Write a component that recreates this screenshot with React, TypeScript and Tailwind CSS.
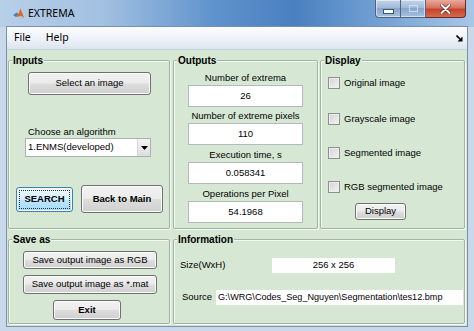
import React from "react";

/**
 * EXTREMA — MATLAB figure window (Win7 Aero frame) with inputs / outputs / display panels.
 */

const sans = "font-['Liberation_Sans',Arial,sans-serif]";
const btn =
  "flex items-center justify-center rounded-[3px] border border-[#707070] bg-[linear-gradient(#f2f2f2,#ebebeb_48%,#dddddd_52%,#cfcfcf)] text-black shadow-[inset_0_0_0_1px_#fbfbfb]";

function Panel({
  title,
  className = "",
  children,
}: {
  title: string;
  className?: string;
  children?: React.ReactNode;
}) {
  return (
    <fieldset
      className={`rounded-[2px] border border-[#a3b2a2] shadow-[inset_1px_1px_0_#f3faf2,1px_1px_0_#f3faf2] ${className}`}
    >
      <legend className="ml-[3px] bg-[#d6e8d4] px-[1px] text-[10px] font-bold leading-[13px] text-black">
        {title}
      </legend>
      {children}
    </fieldset>
  );
}

function OutputField({ label, value, mt }: { label: string; value: string; mt: string }) {
  return (
    <>
      <div className={`${mt} h-[12px] text-center leading-[12px]`}>{label}</div>
      <div className="mx-auto mt-[1px] flex h-[22px] w-[115px] items-center justify-center border border-[#b5b9bf] bg-white">
        {value}
      </div>
    </>
  );
}

function Check({ label, mt }: { label: string; mt: string }) {
  return (
    <div className={`${mt} ml-[7px] flex h-[14px] items-center gap-[4px]`}>
      <span className="h-[12px] w-[12px] border border-[#8e8f8f] bg-[linear-gradient(135deg,#d2d2d2,#f4f4f4)] shadow-[inset_0_0_0_1px_#eeeeee]" />
      <span>{label}</span>
    </div>
  );
}

function MatlabIcon() {
  return (
    <svg width="11" height="11" viewBox="0 0 11 11">
      <path d="M0 7 L4 4.5 L5.5 6 L3 9 Z" fill="#3f7fb8" />
      <path d="M3 9 L5.5 6 L7.5 0.5 L11 10 L8.5 8 Z" fill="#e0661f" />
      <path d="M7.5 0.5 L9 5 L11 10 L9.5 6.5 Z" fill="#b3320f" />
    </svg>
  );
}

export default function App() {
  return (
    <div
      className={`flex h-[331px] w-[474px] flex-col overflow-hidden bg-[linear-gradient(to_right,#b8cfe8,#a2c0e1_22%,#5f93cc_45%,#4a80c0_62%,#6d9dd1_78%,#a9c6e6)] ${sans} text-[9.5px] text-black`}
    >
      {/* title bar */}
      <div className="flex h-[27px] shrink-0 items-start">
        <div className="flex h-[27px] items-center gap-[4px] pl-[13px]">
          <MatlabIcon />
          <span className="font-['Noto_Sans',sans-serif] text-[10.5px] text-black">EXTREMA</span>
        </div>
        <div className="ml-auto mr-[8px] flex h-[18px]">
          <div className="flex rounded-bl-[4px] border border-t-0 border-[#4f6480] bg-[linear-gradient(#c3d5ea,#9db7d6_50%,#88a6cb_50%,#a7c0de)] shadow-[inset_0_0_0_1px_rgba(255,255,255,0.5)]">
            <div className="flex w-[25px] items-center justify-center border-r border-[#4f6480]">
              <span className="mt-[5px] h-[3px] w-[9px] bg-white shadow-[0_0_0_1px_#3b5272]" />
            </div>
            <div className="flex w-[24px] items-center justify-center">
              <span className="h-[7px] w-[9px] border border-[#e4ecf6] opacity-70" />
            </div>
          </div>
          <div className="flex w-[40px] items-center justify-center rounded-br-[4px] border border-l-0 border-t-0 border-[#6b2a22] bg-[linear-gradient(#e9a99c,#d7745f_45%,#c7432b_55%,#d56a4f)]">
            <svg width="11" height="10" viewBox="0 0 11 10">
              <path d="M1.5 1 L9.5 9 M9.5 1 L1.5 9" stroke="#5a1a12" strokeWidth="3.2" strokeLinecap="round" />
              <path d="M1.5 1 L9.5 9 M9.5 1 L1.5 9" stroke="#ffffff" strokeWidth="2" strokeLinecap="round" />
            </svg>
          </div>
        </div>
      </div>

      <div className="flex flex-1 flex-col bg-[#c9d9eb] px-[7px]">
        <div className="shadow-[0_0_0_1px_#7890ad]">
          {/* menu bar */}
          <div className="flex h-[23px] items-center border-b border-[#c5d2e0] bg-[linear-gradient(#fbfcfe,#eef2f8_55%,#dde4ee)] font-['Noto_Sans',sans-serif] text-[10.5px]">
            <span className="ml-[7px]">File</span>
            <span className="ml-[15px]">Help</span>
            <svg className="ml-auto mr-[4px]" width="7" height="7" viewBox="0 0 7 7">
              <path d="M0.5 0.5 L5 5" stroke="#000" strokeWidth="1.6" />
              <path d="M1.5 6.5 L6.5 6.5 L6.5 1.5 Z" fill="#000" />
            </svg>
          </div>

          {/* client area */}
          <div className="flex h-[276px] flex-col bg-[#d6e8d4] pl-[1px] pt-[4px]">
            <div className="flex h-[175px]">
              <Panel title="Inputs" className="w-[162px]">
                <button className={`${btn} ml-[19px] mt-[5px] h-[23px] w-[123px]`}>Select an image</button>
                <div className="ml-[19px] mt-[31px] h-[12px] leading-[12px]">Choose an algorithm</div>
                <div className="ml-[16px] flex h-[19px] w-[126px] items-center border border-[#a9b0b8] bg-white">
                  <span className="flex-1 pl-[2px]">1.ENMS(developed)</span>
                  <span className="flex h-full w-[13px] items-center justify-center border-l border-[#d5d9de] bg-[linear-gradient(#f4f4f4,#dedede)]">
                    <svg width="7" height="4" viewBox="0 0 7 4">
                      <path d="M0 0 L7 0 L3.5 4 Z" fill="#000" />
                    </svg>
                  </span>
                </div>
                <div className="ml-[7px] mt-[28px] flex items-center gap-[8px]">
                  <button className="flex h-[25px] w-[57px] rounded-[3px] border border-[#3c7fb1] bg-[linear-gradient(#eaf6fd,#d9f0fc_48%,#bee6fd_52%,#a7d9f5)] p-[2px] shadow-[inset_0_0_0_1px_#f4fbff]">
                    <span className="flex flex-1 items-center justify-center border border-dotted border-[#333] font-bold">
                      SEARCH
                    </span>
                  </button>
                  <button className={`${btn} h-[28px] w-[82px] font-bold`}>Back to Main</button>
                </div>
              </Panel>

              <Panel title="Outputs" className="ml-[3px] w-[145px]">
                <OutputField mt="mt-[5px]" label="Number of extrema" value="26" />
                <OutputField mt="mt-[3px]" label="Number of extreme pixels" value="110" />
                <OutputField mt="mt-[4px]" label="Execution time, s" value="0.058341" />
                <OutputField mt="mt-[4px]" label="Operations per Pixel" value="54.1968" />
              </Panel>

              <Panel title="Display" className="ml-[2px] w-[145px]">
                <Check mt="mt-[9px]" label="Original image" />
                <Check mt="mt-[22px]" label="Grayscale image" />
                <Check mt="mt-[20px]" label="Segmented image" />
                <Check mt="mt-[20px]" label="RGB segmented image" />
                <button className={`${btn} ml-[34px] mt-[9px] h-[17px] w-[51px]`}>Display</button>
              </Panel>
            </div>

            <div className="mt-[4px] flex h-[91px]">
              <Panel title="Save as" className="w-[162px]">
                <button className={`${btn} ml-[14px] mt-[5px] h-[18px] w-[134px]`}>Save output image as RGB</button>
                <button className={`${btn} ml-[14px] mt-[6px] h-[19px] w-[134px]`}>
                  Save output image as *.mat
                </button>
                <button className={`${btn} ml-[44px] mt-[6px] h-[20px] w-[68px] font-bold`}>Exit</button>
              </Panel>

              <Panel title="Information" className="ml-[3px] w-[292px]">
                <div className="mt-[12px] flex h-[15px] items-center">
                  <span className="ml-[6px] w-[92px]">Size(WxH)</span>
                  <span className="flex h-[15px] w-[123px] items-center justify-center bg-white">256 x 256</span>
                </div>
                <div className="mt-[17px] flex h-[15px] items-center">
                  <span className="ml-[8px] w-[34px]">Source</span>
                  <span className="flex h-[15px] w-[247px] items-center bg-white pl-[2px] text-[9.1px]">
                    G:\WRG\Codes_Seg_Nguyen\Segmentation\tes12.bmp
                  </span>
                </div>
              </Panel>
            </div>
          </div>
        </div>
      </div>
    </div>
  );
}
